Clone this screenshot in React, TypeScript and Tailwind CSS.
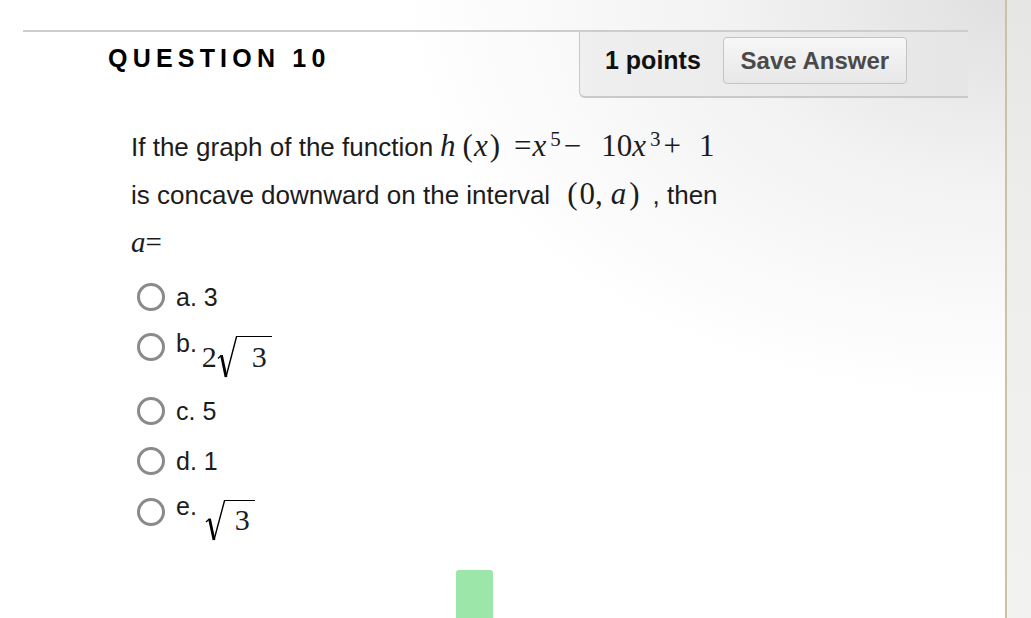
import React from "react";

const math = "font-['Liberation_Serif','Times_New_Roman',serif]";

function Radio() {
  return <div className="w-[28px] h-[28px] shrink-0 rounded-full border-[3px] border-[#8a8a8a] bg-white" />;
}

function Radical({ h }: { h: number }) {
  return (
    <svg width="20" height={h} viewBox={`0 0 20 ${h}`} className="shrink-0 overflow-visible">
      <path d={`M1 ${h * 0.55} L4.5 ${h * 0.47}`} stroke="#000" strokeWidth="1.3" fill="none" />
      <path d={`M4.5 ${h * 0.47} L9 ${h}`} stroke="#000" strokeWidth="2.8" fill="none" />
      <path d={`M9 ${h} L19.5 0.75 L20 0.75`} stroke="#000" strokeWidth="1.4" fill="none" />
    </svg>
  );
}

export default function App() {
  return (
    <div className="w-[1031px] h-[618px] overflow-hidden flex font-['Liberation_Sans',Arial,sans-serif] text-[#1c1c1c]">
      {/* main page */}
      <main className="w-[1005px] shrink-0 pt-[30px] pl-[23px] bg-[radial-gradient(ellipse_60%_65%_at_100%_0%,#e0e0e0_0%,#f2f2f2_45%,#ffffff_100%)]">
        {/* header */}
        <header className="w-[945px] border-t-2 border-[#cdcdcd] flex justify-between">
          <h2 className="pl-[85px] pt-[12px] text-[25px] leading-[28px] font-bold tracking-[5.2px] text-black">
            QUESTION 10
          </h2>
          <div className="w-[389px] h-[66px] border-l border-b-2 border-[#c9c9c9] rounded-bl-[6px] bg-[linear-gradient(90deg,#efefef,#e6e6e6)] pl-[25px] pt-[5px] flex items-start">
            <div className="flex items-center gap-[22px]">
              <span className="text-[25px] font-bold text-[#111]">1 points</span>
              <button className="w-[184px] h-[47px] rounded-[4px] border border-[#c4c4c4] bg-[linear-gradient(#f7f7f7,#e7e7e7)] text-[24px] font-bold text-[#4a4a4a]">
                Save Answer
              </button>
            </div>
          </div>
        </header>

        {/* question text */}
        <div className="pl-[108px] mt-[24px] text-[26px] leading-[48px]">
          <p className="h-[48px] flex items-baseline">
            <span>If the graph of the function</span>
            <span className={`${math} text-[31px] ml-[7px] flex items-baseline`}>
              <i>h</i>
              <span className="ml-[7px]">(</span>
              <i className="ml-[1px]">x</i>
              <span className="ml-[2px]">)</span>
              <span className="ml-[14px]">=</span>
              <i className="ml-[1px]">x</i>
              <sup className="text-[21px] ml-[4px]">5</sup>
              <span className="ml-[3px]">−</span>
              <span className="ml-[20px]">10</span>
              <i>x</i>
              <sup className="text-[21px] ml-[4px]">3</sup>
              <span className="ml-[3px]">+</span>
              <span className="ml-[18px]">1</span>
            </span>
          </p>
          <p className="h-[48px] flex items-baseline">
            <span>is concave downward on the interval</span>
            <span className={`${math} text-[31px] ml-[17px]`}>
              (<span className="ml-[2px]">0</span>,<i className="ml-[8px]">a</i>
              <span className="ml-[3px]">)</span>
            </span>
            <span className="ml-[13px]">, then</span>
          </p>
          <p className={`${math} h-[48px] text-[29px]`}>
            <i>a</i>=
          </p>
        </div>

        {/* options */}
        <div className="pl-[114px] mt-[17px] text-[25px]">
          <div className="h-[50px] flex items-start">
            <Radio />
            <span className="ml-[11px] leading-[28px]">a. 3</span>
          </div>

          <div className="h-[64px] flex items-start">
            <Radio />
            <span className="ml-[11px] -mt-[4px] leading-[28px]">b.</span>
            <span className={`${math} text-[30px] ml-[5px] mt-[3px] flex items-start`}>
              <span className="mt-[6px] leading-[30px]">2</span>
              <Radical h={41} />
              <span className="border-t-[1.5px] border-black pt-[5px] pl-[15px] pr-[5px] leading-[30px]">3</span>
            </span>
          </div>

          <div className="h-[50px] flex items-start">
            <Radio />
            <span className="ml-[11px] leading-[28px]">c. 5</span>
          </div>

          <div className="h-[51px] flex items-start">
            <Radio />
            <span className="ml-[11px] leading-[28px]">d. 1</span>
          </div>

          <div className="h-[50px] flex items-start">
            <Radio />
            <span className="ml-[11px] -mt-[6px] leading-[28px]">e.</span>
            <span className={`${math} text-[30px] ml-[8px] mt-[2px] flex items-start`}>
              <Radical h={40} />
              <span className="border-t-[1.5px] border-black pt-[4px] pl-[10px] pr-[5px] leading-[30px]">3</span>
            </span>
          </div>
        </div>

        {/* floating green tab */}
        <div className="ml-[433px] mt-[22px] w-[37px] h-[60px] rounded-t-[3px] bg-[#9de6aa]" />
      </main>

      {/* frame edge */}
      <div className="w-[2px] shrink-0 bg-[#c9c3a4]" />
      <div className="flex-1 bg-[linear-gradient(#e6e6e4,#eeeeec_40%,#f2f2f0)]" />
    </div>
  );
}
